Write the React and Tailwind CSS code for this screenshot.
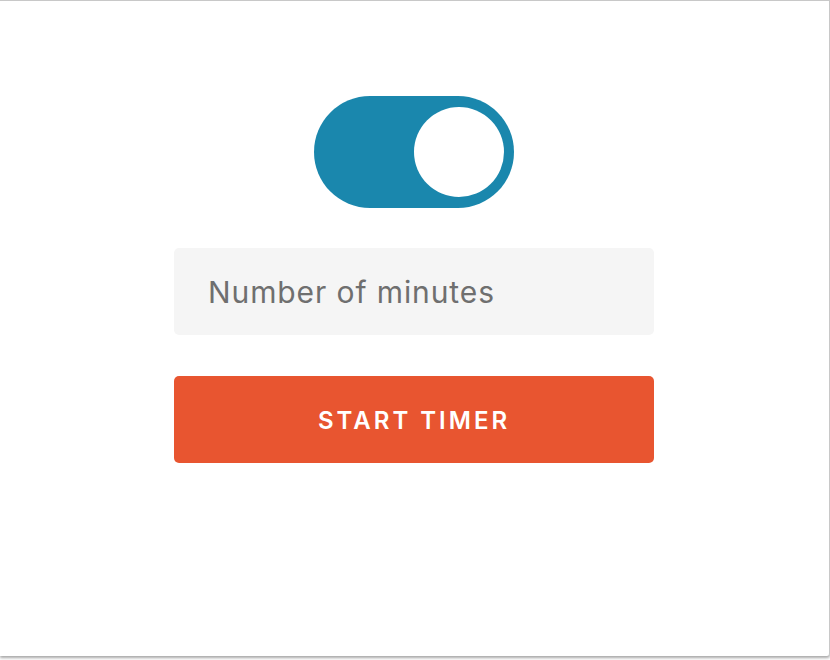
import React from 'react';

const App = () => {
    return (
        <div className="w-[830px] h-[660px] bg-white" style={{ fontFamily: 'Inter, "Open Sans", sans-serif' }}>
            <div className="h-[656px] bg-white border-t border-r border-[#c8c8c8] rounded-br-[3px] shadow-[0_2px_3px_rgba(0,0,0,0.35)]">
                <div className="flex flex-col items-center pt-[95px] pr-[1px]">
                    <button className="w-[200px] h-[112px] rounded-full bg-[#1a87ad] flex items-center justify-end px-[10px]">
                        <span className="block w-[90px] h-[90px] rounded-full bg-white" />
                    </button>
                    <input
                        type="text"
                        placeholder="Number of minutes"
                        className="mt-[40px] w-[480px] h-[87px] rounded-[5px] bg-[#f5f5f5] px-[34px] pt-[1px] text-[30px] tracking-[0.9px] text-[#444] placeholder:text-[#6f6f6f] outline-none"
                    />
                    <button className="mt-[41px] w-[480px] h-[87px] rounded-[5px] bg-[#e85530] text-white text-[24px] font-semibold tracking-[3px] pt-[3px]">
                        START TIMER
                    </button>
                </div>
            </div>
        </div>
    );
};

export default App;
